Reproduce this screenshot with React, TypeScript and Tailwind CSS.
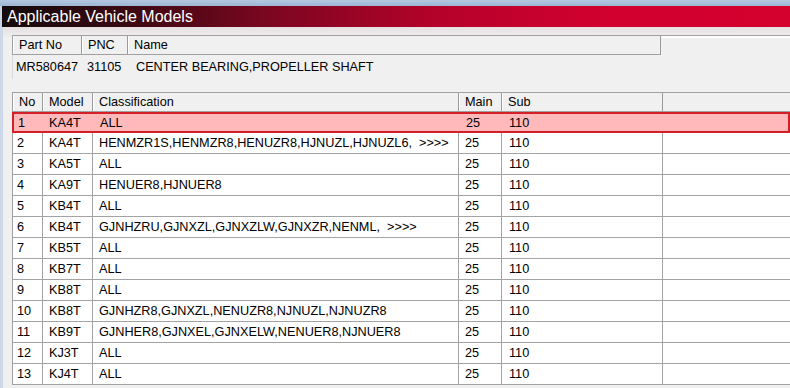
import React from "react";

const parts = { partNo: "MR580647", pnc: "31105", name: "CENTER BEARING,PROPELLER SHAFT" };

const rows = [
  ["1", "KA4T", "ALL"],
  ["2", "KA4T", "HENMZR1S,HENMZR8,HENUZR8,HJNUZL,HJNUZL6,  >>>>"],
  ["3", "KA5T", "ALL"],
  ["4", "KA9T", "HENUER8,HJNUER8"],
  ["5", "KB4T", "ALL"],
  ["6", "KB4T", "GJNHZRU,GJNXZL,GJNXZLW,GJNXZR,NENML,  >>>>"],
  ["7", "KB5T", "ALL"],
  ["8", "KB7T", "ALL"],
  ["9", "KB8T", "ALL"],
  ["10", "KB8T", "GJNHZR8,GJNXZL,NENUZR8,NJNUZL,NJNUZR8"],
  ["11", "KB9T", "GJNHER8,GJNXEL,GJNXELW,NENUER8,NJNUER8"],
  ["12", "KJ3T", "ALL"],
  ["13", "KJ4T", "ALL"],
];

const cell = "shrink-0 border-r border-[#a3a3a3] whitespace-pre overflow-hidden flex items-center";
const head = "shrink-0 border-r border-[#9a9a9a] pl-[5px] border-l border-l-white flex items-center";

export default function App() {
  return (
    <div className="w-[790px] h-[388px] overflow-hidden bg-[#f0f0f0] text-black text-[12.7px] leading-none font-['Liberation_Sans',Arial,sans-serif]">
      {/* window frame strip */}
      <div className="h-[6px] bg-gradient-to-b from-[#b4c8e0] to-[#9db6d4]" />
      <div className="flex">
        <div className="w-[2px] h-[21px] bg-[#c8d4e4]" />
        <div className="flex-1 h-[21px] flex items-center pl-[5px] text-white text-[16px] bg-[linear-gradient(to_right,#140a0c_0%,#3a0a12_16%,#7c0620_34%,#b4022a_55%,#d0002e_75%,#d4002e_100%)]">
          Applicable Vehicle Models
        </div>
      </div>

      <div className="flex">
        <div className="w-[3px] h-[361px] bg-[#cdd8e8]" />
        <div className="flex-1 pl-[9px] pt-[8px] bg-gradient-to-b from-[#e6dfe2] from-0% via-[#f0f0f0] via-[3%] to-[#f0f0f0]">
          {/* part header */}
          <div className="flex h-[20px] border-t border-[#a0a0a0]">
            <div className="flex border-l border-[#a0a0a0] border-b bg-[#f0f0f0]">
              <div className={`${head} w-[69px]`}>Part No</div>
              <div className={`${head} w-[46px]`}>PNC</div>
              <div className={`${head} w-[533px]`}>Name</div>
            </div>
            <div className="flex-1 border-t-2 border-white" />
          </div>
          <div className="flex h-[24px] items-center border-l border-[#d8d8d8]">
            <span className="w-[69px] pl-[3px] whitespace-nowrap">{parts.partNo}</span>
            <span className="w-[47px] pl-[5px]">{parts.pnc}</span>
            <span className="pl-[7px]">{parts.name}</span>
          </div>

          {/* models grid */}
          <div className="mt-[13px] border-l border-[#a0a0a0]">
            <div className="flex h-[20px] border-t border-b border-[#a0a0a0] bg-[#f0f0f0]">
              <div className={`${head} w-[30px]`}>No</div>
              <div className={`${head} w-[50px]`}>Model</div>
              <div className={`${head} w-[366px]`}>Classification</div>
              <div className={`${head} w-[43px]`}>Main</div>
              <div className={`${head} w-[161px]`}>Sub</div>
              <div className="flex-1" />
            </div>
            {rows.map(([no, model, cls], i) =>
              i === 0 ? (
                <div key={no} className="flex h-[21px] pt-px bg-[#ffb9bb] border-2 border-[#d42027] -ml-px">
                  <div className="w-[31px] shrink-0 pl-[4px] flex items-center">{no}</div>
                  <div className="w-[50px] shrink-0 pl-[4px] flex items-center">{model}</div>
                  <div className="w-[366px] shrink-0 pl-[5px] flex items-center">{cls}</div>
                  <div className="w-[43px] shrink-0 pl-[5px] flex items-center">25</div>
                  <div className="w-[161px] shrink-0 pl-[5px] flex items-center">110</div>
                </div>
              ) : (
                <div key={no} className="flex h-[21px] bg-white border-b border-[#a3a3a3]">
                  <div className={`${cell} w-[30px] pl-[4px]`}>{no}</div>
                  <div className={`${cell} w-[50px] pl-[6px]`}>{model}</div>
                  <div className={`${cell} w-[366px] pl-[6px]`}>{cls}</div>
                  <div className={`${cell} w-[43px] pl-[6px]`}>25</div>
                  <div className={`${cell} w-[161px] pl-[7px]`}>110</div>
                  <div className="flex-1" />
                </div>
              )
            )}
          </div>
        </div>
      </div>
    </div>
  );
}
